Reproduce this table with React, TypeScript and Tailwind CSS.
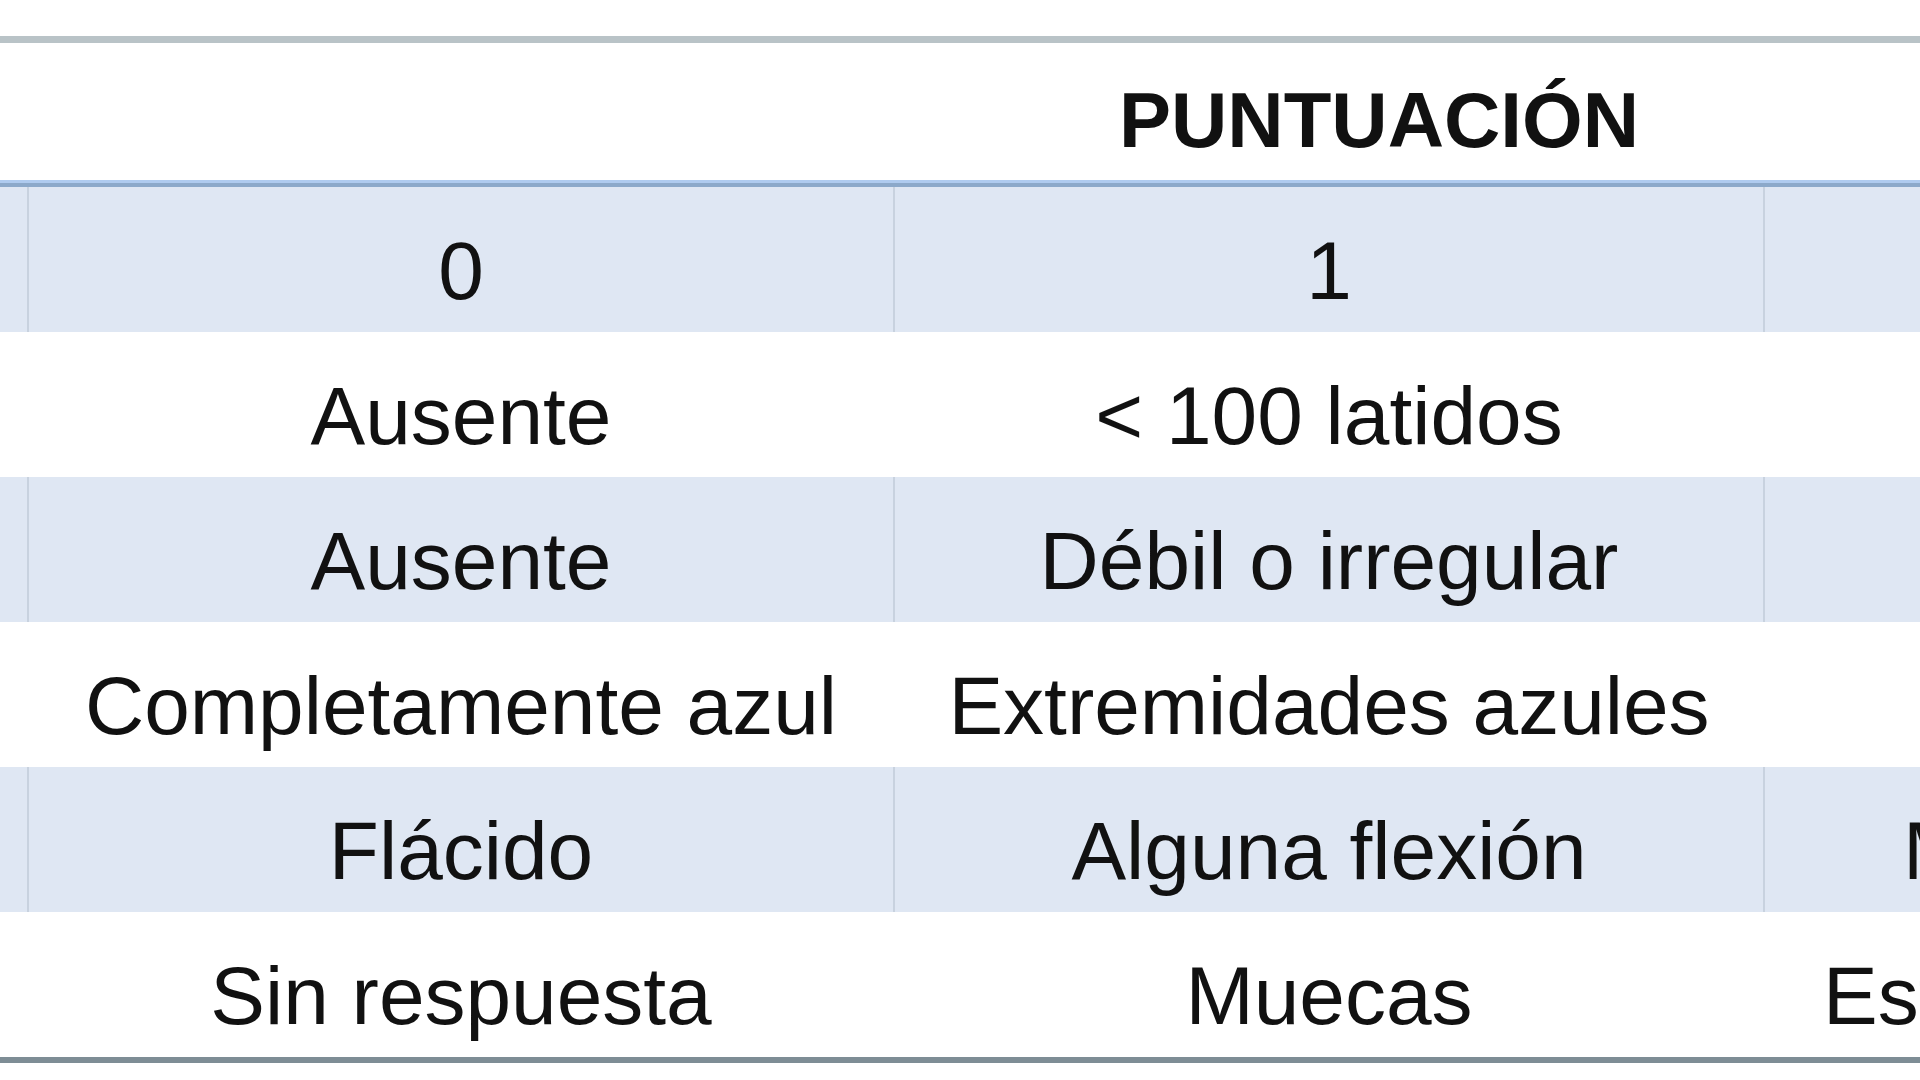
const rows = [
  { cells: ["0", "1", "2"] },
  { cells: ["Ausente", "< 100 latidos", "> 100 latidos"] },
  { cells: ["Ausente", "Débil o irregular", "Llanto fuerte"] },
  { cells: ["Completamente azul", "Extremidades azules", "Rosado"] },
  { cells: ["Flácido", "Alguna flexión", "Movimiento activo"] },
  { cells: ["Sin respuesta", "Muecas", "Estornudo, tos o llanto"] },
];

export default function App() {
  return (
    <div className="w-[1920px] h-[1080px] overflow-hidden bg-white text-[#111111] font-['Liberation_Sans',Arial,sans-serif]">
      <div className="h-[36px]" />
      <div className="h-[7px] bg-[#b9c3c7]" />

      {/* Header */}
      <div className="grid grid-cols-[27px_866px_870px_934px] h-[137px]">
        <div />
        <div className="col-span-3 flex items-center justify-center pl-[34px] pt-[16px]">
          <span className="text-[78px] font-bold leading-none">PUNTUACIÓN</span>
        </div>
      </div>
      <div className="h-[3px] bg-[#afcbef]" />
      <div className="h-[4px] bg-[#8ca9ca]" />

      {/* Body */}
      {rows.map((row, i) => {
        const shaded = i % 2 === 0;
        return (
          <div
            key={i}
            className={`grid grid-cols-[27px_866px_870px_934px] h-[145px] ${shaded ? "bg-[#dfe7f3]" : "bg-white"}`}
          >
            <div />
            {row.cells.map((c, j) => (
              <div
                key={j}
                className={`flex items-center justify-center pt-[22px] border-l-2 ${shaded ? "border-[#c8d2df]" : "border-white"}`}
              >
                <span className="text-[82px] leading-none whitespace-nowrap">{c}</span>
              </div>
            ))}
          </div>
        );
      })}
      <div className="h-[6px] bg-[#7e8d95]" />
    </div>
  );
}
